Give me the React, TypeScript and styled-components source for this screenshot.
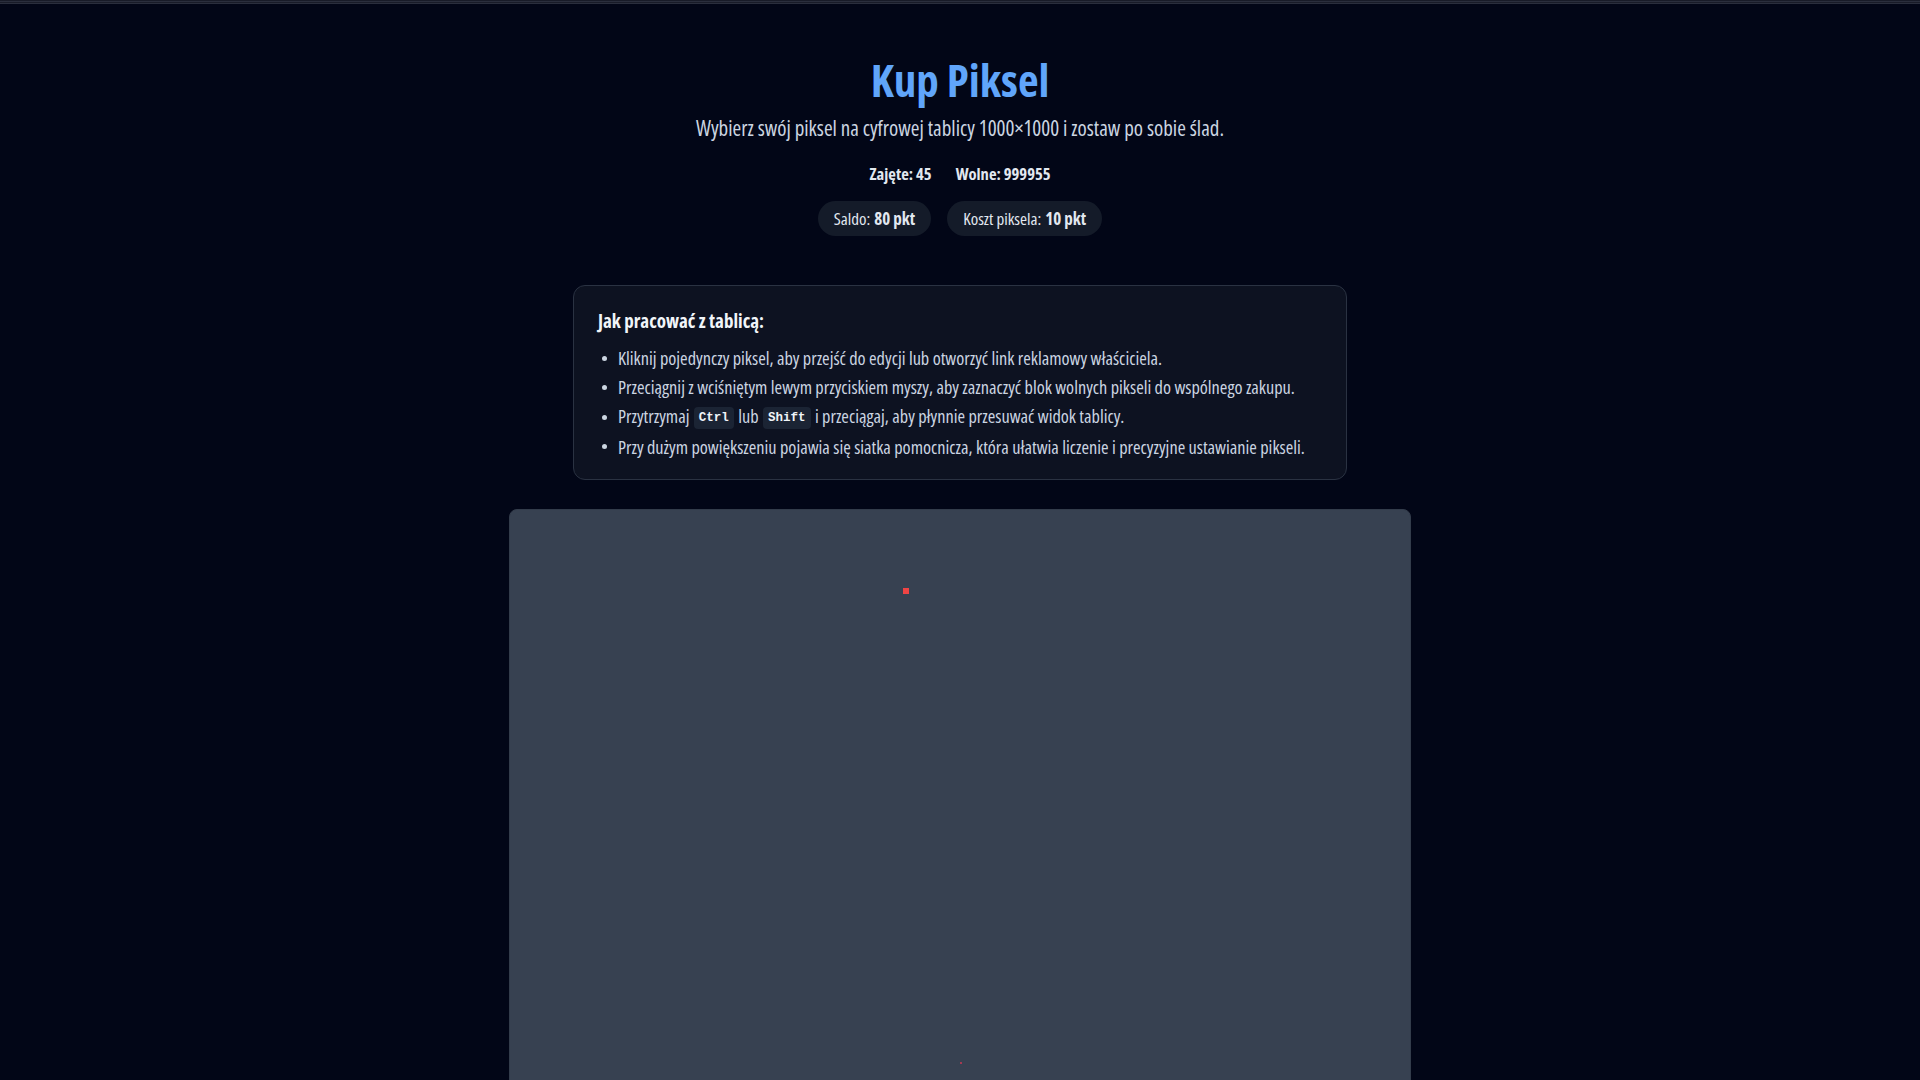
import React from 'react';
import styled, { createGlobalStyle } from 'styled-components';

const Global = createGlobalStyle`
  html, body {
    margin: 0;
    background: #020617;
  }
  body {
    font-family: "Open Sans", "Noto Sans", sans-serif;
    font-stretch: 75%;
    color: #e2e8f0;
  }
`;

const TopStrip = styled.div`
  height: 4px;
  background: repeating-linear-gradient(
    to bottom,
    #181b28 0px,
    #181b28 1px,
    #2a2e3d 1px,
    #2a2e3d 2px
  );
`;

const Page = styled.main`
  display: flex;
  flex-direction: column;
  align-items: center;
  padding-top: 48px;
`;

const Title = styled.h1`
  margin: 0;
  font-size: 45px;
  line-height: 55px;
  font-weight: 700;
  color: #60a5fa;
`;

const Subtitle = styled.p`
  margin: 8px 0 0;
  font-size: 21px;
  line-height: 27px;
  color: #cbd5e1;
`;

const Stats = styled.div`
  display: flex;
  gap: 24px;
  margin-top: 20px;
  font-size: 16.6px;
  line-height: 24px;
  font-weight: 700;
  color: #e2e8f0;
`;

const Pills = styled.div`
  display: flex;
  gap: 16px;
  margin-top: 15px;
`;

const Pill = styled.div`
  height: 35px;
  display: flex;
  align-items: center;
  padding: 0 16px;
  border-radius: 999px;
  background: #141b29;
  font-size: 17px;
  color: #e2e8f0;

  b {
    font-weight: 700;
    margin-left: 4px;
  }
`;

const InfoBox = styled.section`
  box-sizing: border-box;
  width: 774px;
  margin-top: 49px;
  padding: 23px 24px 21px;
  border: 1px solid #2a3242;
  border-radius: 12px;
  background: #0d1221;
`;

const InfoTitle = styled.h2`
  margin: 0 0 14px;
  font-size: 19px;
  line-height: 24px;
  font-weight: 700;
  color: #f1f5f9;
`;

const List = styled.ul`
  margin: 0;
  padding: 0;
  list-style: none;
  display: flex;
  flex-direction: column;
  gap: 6.5px;
`;

const Item = styled.li`
  display: flex;
  align-items: center;
  font-size: 18.3px;
  line-height: 22.5px;
  color: #cbd5e1;

  &::before {
    content: '';
    flex: none;
    width: 5px;
    height: 5px;
    margin: 0 11px 0 4px;
    border-radius: 50%;
    background: #cbd5e1;
  }
`;

const ItemText = styled.span`
  white-space: nowrap;
`;

const Key = styled.kbd`
  display: inline-block;
  height: 22px;
  line-height: 22px;
  vertical-align: middle;
  padding: 0 5px;
  margin: 0 1px;
  border-radius: 4px;
  background: #1b2434;
  font-family: "Liberation Mono", "DejaVu Sans Mono", monospace;
  font-size: 12.5px;
  font-weight: 700;
  color: #f1f5f9;
`;

const Board = styled.div`
  position: relative;
  box-sizing: border-box;
  width: 902px;
  height: 902px;
  margin: 29px 0 40px;
  border: 1px solid #333c4b;
  border-radius: 8px;
  background: #374151;
  overflow: hidden;
`;

const Pixel = styled.span<{ $size: number; $color: string }>`
  position: absolute;
  width: ${(p) => p.$size}px;
  height: ${(p) => p.$size}px;
  background: ${(p) => p.$color};
`;

const pixels = [
  { x: 393, y: 78, size: 6, color: '#ef4444' },
  { x: 450, y: 552, size: 2, color: '#a33a52' },
];

export default function App() {
  return (
    <>
      <Global />
      <TopStrip />
      <Page>
        <Title>Kup Piksel</Title>
        <Subtitle>Wybierz swój piksel na cyfrowej tablicy 1000×1000 i zostaw po sobie ślad.</Subtitle>
        <Stats>
          <span>Zajęte: 45</span>
          <span>Wolne: 999955</span>
        </Stats>
        <Pills>
          <Pill>
            Saldo:<b>80 pkt</b>
          </Pill>
          <Pill>
            Koszt piksela:<b>10 pkt</b>
          </Pill>
        </Pills>
        <InfoBox>
          <InfoTitle>Jak pracować z tablicą:</InfoTitle>
          <List>
            <Item>
              <ItemText>Kliknij pojedynczy piksel, aby przejść do edycji lub otworzyć link reklamowy właściciela.</ItemText>
            </Item>
            <Item>
              <ItemText>
                Przeciągnij z wciśniętym lewym przyciskiem myszy, aby zaznaczyć blok wolnych pikseli do wspólnego
                zakupu.
              </ItemText>
            </Item>
            <Item>
              <ItemText>
                Przytrzymaj <Key>Ctrl</Key> lub <Key>Shift</Key> i przeciągaj, aby płynnie przesuwać widok tablicy.
              </ItemText>
            </Item>
            <Item>
              <ItemText>
                Przy dużym powiększeniu pojawia się siatka pomocnicza, która ułatwia liczenie i precyzyjne
                ustawianie pikseli.
              </ItemText>
            </Item>
          </List>
        </InfoBox>
        <Board>
          {pixels.map((p, i) => (
            <Pixel key={i} $size={p.size} $color={p.color} style={{ left: p.x, top: p.y }} />
          ))}
        </Board>
      </Page>
    </>
  );
}
